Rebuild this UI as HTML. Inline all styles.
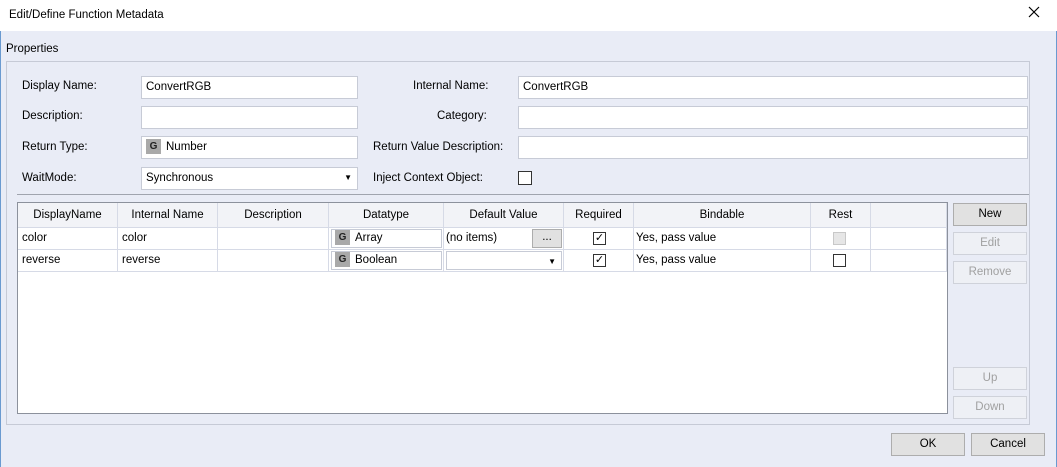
<!DOCTYPE html><html><head><style>
body{margin:0;width:1057px;height:467px;background:#e9ecf6;font-family:"Segoe UI","Liberation Sans",sans-serif;font-size:11.5px;color:#000;position:relative;overflow:hidden}
.a{position:absolute}
.tb{left:0;top:0;width:1057px;height:31px;background:#fff}
.inp{position:absolute;background:#fff;border:1px solid #c7cbd6;box-sizing:border-box;height:23px;padding:2px 4px;line-height:17px}
.lbl{position:absolute;line-height:16px}
.g{display:inline-block;width:15px;height:15px;background:#a9a9a9;color:#222;font-size:10px;font-weight:bold;text-align:center;line-height:15px;margin-right:5px;vertical-align:middle}
.btn{position:absolute;width:74px;height:23px;box-sizing:border-box;border:1px solid #cfd2da;background:#eef0f5;color:#a0a0a0;text-align:center;line-height:21px}
.btn.on{background:#e1e1e1;border-color:#adadad;color:#000}
.cell{position:absolute;box-sizing:border-box;border-right:1px solid #d6dae6;border-bottom:1px solid #d6dae6;padding:0 4px;line-height:20px;white-space:nowrap}
.hd{background:#f2f3f7;text-align:center;height:25px;line-height:24px}
.cb{position:absolute;width:13px;height:13px;border:1px solid #333;box-sizing:border-box;background:#fff}
</style></head><body>
<div class="a tb"></div>
<div class="a" style="left:0;top:31px;width:1px;height:436px;background:#6a9ad0"></div>
<div class="a" style="left:1056px;top:31px;width:1px;height:436px;background:#6a9ad0"></div>
<div class="lbl" style="left:9px;top:7px">Edit/Define Function Metadata</div>
<svg class="a" style="left:1028px;top:6px" width="12" height="12"><path d="M1 1L11 11M11 1L1 11" stroke="#000" stroke-width="1.2"/></svg>
<div class="lbl" style="left:6px;top:41px">Properties</div>
<div class="a" style="left:6px;top:61px;width:1024px;height:364px;border:1px solid #c6cad6;box-sizing:border-box"></div>

<div class="lbl" style="left:22px;top:78px">Display Name:</div>
<div class="lbl" style="left:22px;top:108px">Description:</div>
<div class="lbl" style="left:22px;top:139px">Return Type:</div>
<div class="lbl" style="left:22px;top:170px">WaitMode:</div>
<div class="inp" style="left:141px;top:76px;width:217px">ConvertRGB</div>
<div class="inp" style="left:141px;top:106px;width:217px"></div>
<div class="inp" style="left:141px;top:136px;width:217px;padding-left:4px"><span class="g">G</span>Number</div>
<div class="inp" style="left:141px;top:167px;width:217px">Synchronous<span style="position:absolute;right:5px;top:1px;font-size:8px">▼</span></div>

<div class="lbl" style="left:413px;top:78px">Internal Name:</div>
<div class="lbl" style="left:437px;top:108px">Category:</div>
<div class="lbl" style="left:373px;top:139px">Return Value Description:</div>
<div class="lbl" style="left:373px;top:170px">Inject Context Object:</div>
<div class="inp" style="left:518px;top:76px;width:510px">ConvertRGB</div>
<div class="inp" style="left:518px;top:106px;width:510px"></div>
<div class="inp" style="left:518px;top:136px;width:510px"></div>
<div class="cb" style="left:518px;top:171px;width:14px;height:14px"></div>
<div class="a" style="left:17px;top:194px;width:1012px;height:1px;background:#a0a4ae"></div>

<div class="a" style="left:17px;top:202px;width:931px;height:212px;background:#fff;border:1px solid #8c919c;box-sizing:border-box"></div>
<div class="cell hd" style="left:18px;top:203px;width:100px">DisplayName</div>
<div class="cell hd" style="left:118px;top:203px;width:100px">Internal Name</div>
<div class="cell hd" style="left:218px;top:203px;width:111px">Description</div>
<div class="cell hd" style="left:329px;top:203px;width:115px">Datatype</div>
<div class="cell hd" style="left:444px;top:203px;width:120px">Default Value</div>
<div class="cell hd" style="left:564px;top:203px;width:70px">Required</div>
<div class="cell hd" style="left:634px;top:203px;width:177px">Bindable</div>
<div class="cell hd" style="left:811px;top:203px;width:60px">Rest</div>
<div class="cell hd" style="left:871px;top:203px;width:76px"></div>

<div class="cell" style="left:18px;top:228px;width:100px;height:22px">color</div>
<div class="cell" style="left:118px;top:228px;width:100px;height:22px">color</div>
<div class="cell" style="left:218px;top:228px;width:111px;height:22px"></div>
<div class="cell" style="left:329px;top:228px;width:115px;height:22px"><div class="inp" style="position:absolute;left:2px;top:1px;width:111px;height:19px;padding:0 3px;line-height:17px"><span class="g">G</span>Array</div></div>
<div class="cell" style="left:444px;top:228px;width:120px;height:22px;padding:0 2px">(no items)<div style="position:absolute;left:88px;top:1px;width:30px;height:19px;border:1px solid #adadad;background:#e1e1e1;box-sizing:border-box;text-align:center;line-height:15px">...</div></div>
<div class="cell" style="left:564px;top:228px;width:70px;height:22px"><div class="cb" style="left:29px;top:4px;text-align:center;line-height:11px;font-size:11px">✓</div></div>
<div class="cell" style="left:634px;top:228px;width:177px;height:22px;padding-left:2px">Yes, pass value</div>
<div class="cell" style="left:811px;top:228px;width:60px;height:22px"><div class="cb" style="left:22px;top:4px;background:#e6e6e6;border-color:#c8c8c8"></div></div>
<div class="cell" style="left:871px;top:228px;width:76px;height:22px"></div>

<div class="cell" style="left:18px;top:250px;width:100px;height:22px">reverse</div>
<div class="cell" style="left:118px;top:250px;width:100px;height:22px">reverse</div>
<div class="cell" style="left:218px;top:250px;width:111px;height:22px"></div>
<div class="cell" style="left:329px;top:250px;width:115px;height:22px"><div class="inp" style="position:absolute;left:2px;top:1px;width:111px;height:19px;padding:0 3px;line-height:17px"><span class="g">G</span>Boolean</div></div>
<div class="cell" style="left:444px;top:250px;width:120px;height:22px"><div class="inp" style="position:absolute;left:2px;top:1px;width:116px;height:19px"><span style="position:absolute;right:5px;top:1px;font-size:8px">▼</span></div></div>
<div class="cell" style="left:564px;top:250px;width:70px;height:22px"><div class="cb" style="left:29px;top:4px;text-align:center;line-height:11px;font-size:11px">✓</div></div>
<div class="cell" style="left:634px;top:250px;width:177px;height:22px;padding-left:2px">Yes, pass value</div>
<div class="cell" style="left:811px;top:250px;width:60px;height:22px"><div class="cb" style="left:22px;top:4px"></div></div>
<div class="cell" style="left:871px;top:250px;width:76px;height:22px"></div>

<div class="btn on" style="left:953px;top:203px">New</div>
<div class="btn" style="left:953px;top:232px">Edit</div>
<div class="btn" style="left:953px;top:261px">Remove</div>
<div class="btn" style="left:953px;top:367px">Up</div>
<div class="btn" style="left:953px;top:396px">Down</div>
<div class="btn on" style="left:891px;top:433px">OK</div>
<div class="btn on" style="left:971px;top:433px">Cancel</div>
</body></html>
